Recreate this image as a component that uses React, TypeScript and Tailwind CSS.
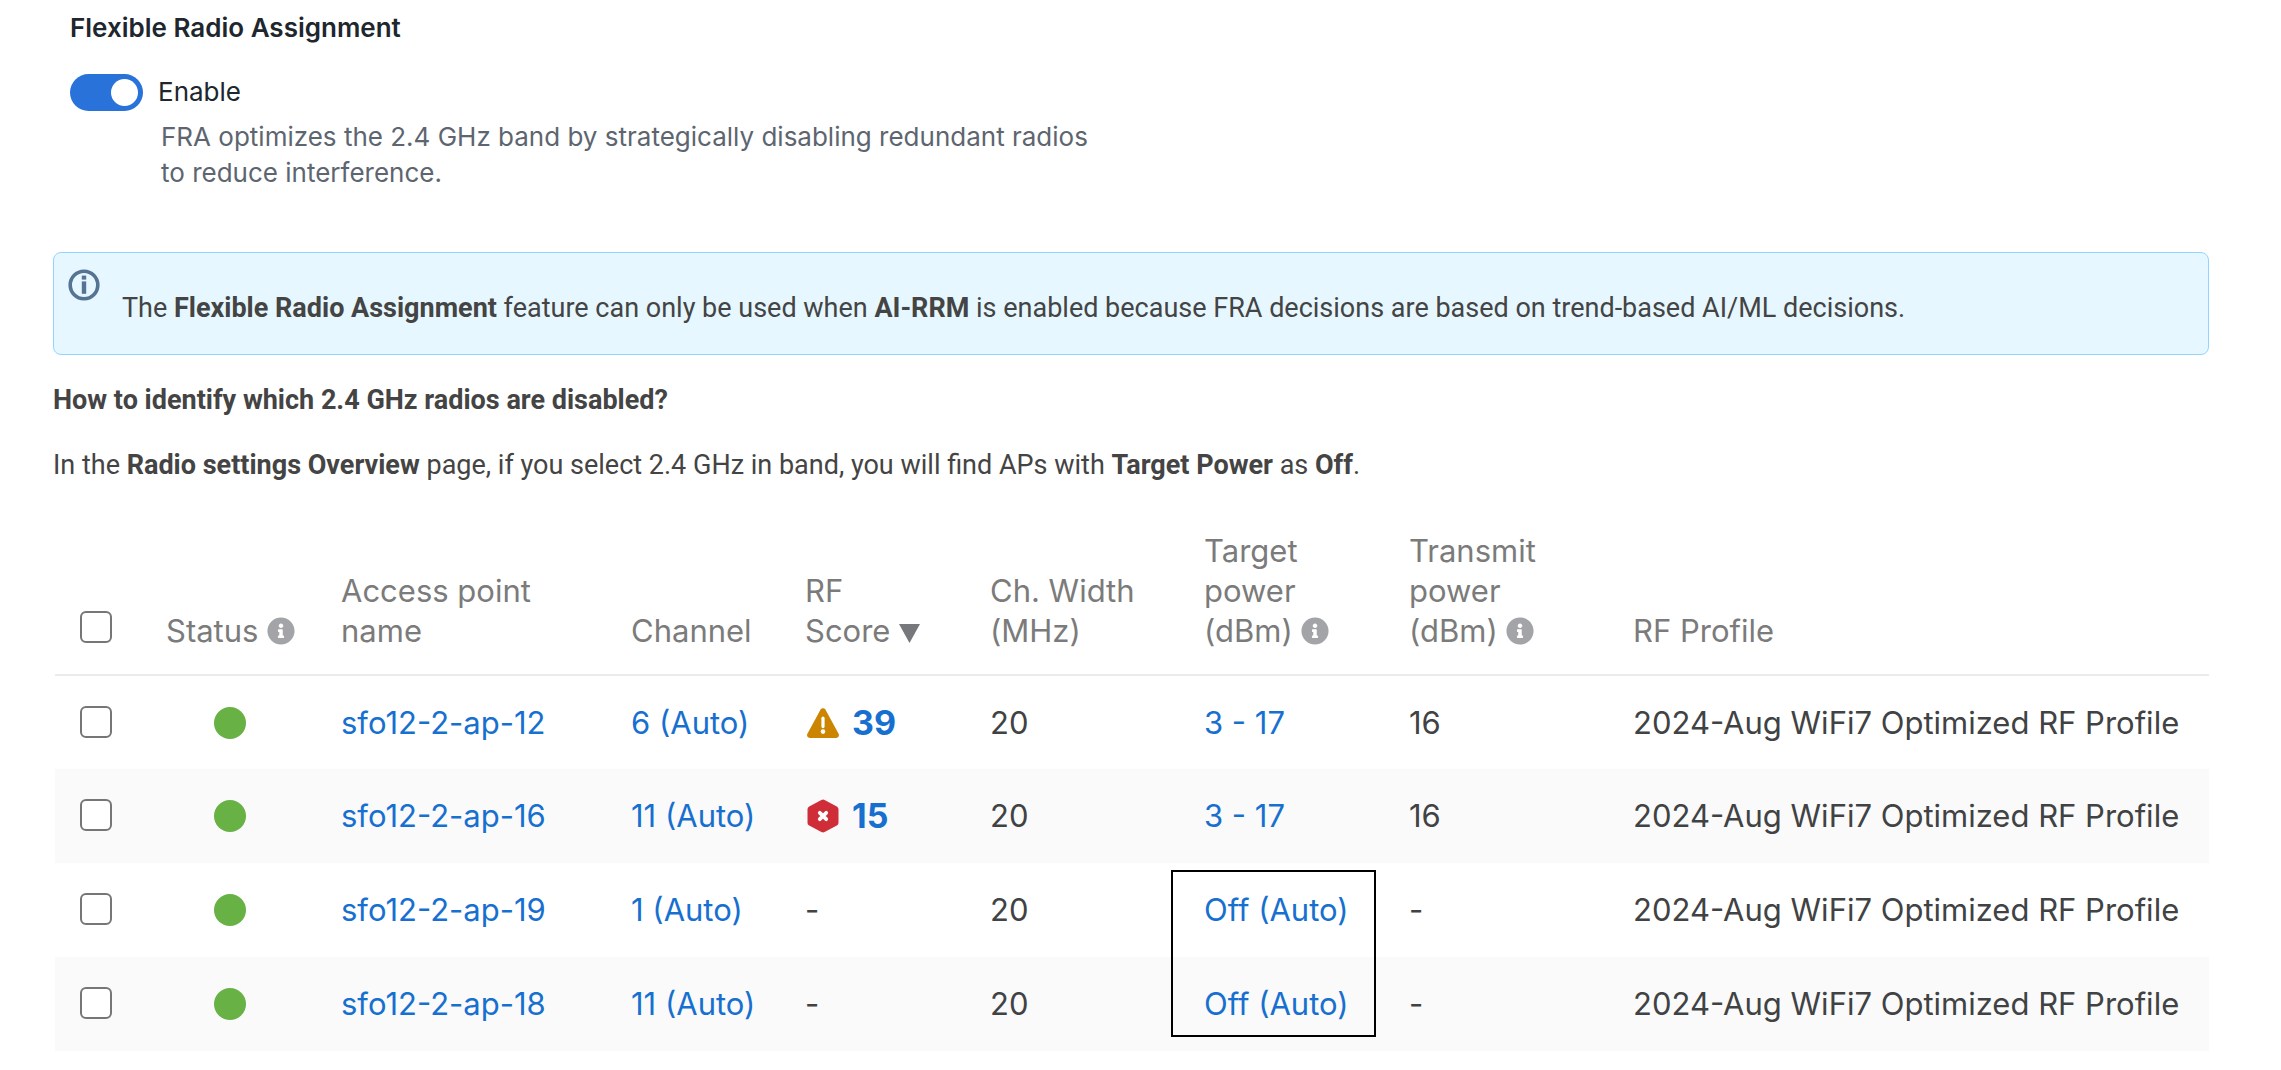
import React, { useState } from 'react';
import { FaInfoCircle } from 'react-icons/fa';

type Alarm = 'warning' | 'critical';

interface AccessPoint {
  name: string;
  channel: string;
  score?: number;
  alarm?: Alarm;
  width: string;
  target: string;
  transmit: string;
  profile: string;
}

const accessPoints: AccessPoint[] = [
  { name: 'sfo12-2-ap-12', channel: '6 (Auto)', score: 39, alarm: 'warning', width: '20', target: '3 - 17', transmit: '16', profile: '2024-Aug WiFi7 Optimized RF Profile' },
  { name: 'sfo12-2-ap-16', channel: '11 (Auto)', score: 15, alarm: 'critical', width: '20', target: '3 - 17', transmit: '16', profile: '2024-Aug WiFi7 Optimized RF Profile' },
  { name: 'sfo12-2-ap-19', channel: '1 (Auto)', width: '20', target: 'Off (Auto)', transmit: '-', profile: '2024-Aug WiFi7 Optimized RF Profile' },
  { name: 'sfo12-2-ap-18', channel: '11 (Auto)', width: '20', target: 'Off (Auto)', transmit: '-', profile: '2024-Aug WiFi7 Optimized RF Profile' },
];

const WarningIcon = () => (
  <svg viewBox="0 0 34 32" className="w-[34px] h-8 shrink-0" aria-hidden="true">
    <path d="M14.6 2.6a2.8 2.8 0 0 1 4.8 0l13.2 24.2a2.8 2.8 0 0 1-2.4 4.1H3.8a2.8 2.8 0 0 1-2.4-4.1z" fill="#cb8500" />
    <path d="M17 11.2v8.4" stroke="#fff" strokeWidth="3.2" strokeLinecap="round" />
    <circle cx="17" cy="24.6" r="2.3" fill="#fff" />
  </svg>
);

const CriticalIcon = () => (
  <svg viewBox="0 0 34 34" className="size-[34px] shrink-0" aria-hidden="true">
    <path d="M15.4.9a3.2 3.2 0 0 1 3.2 0l12.2 6.6a3.2 3.2 0 0 1 1.7 2.8v13.4a3.2 3.2 0 0 1-1.7 2.8l-12.2 6.6a3.2 3.2 0 0 1-3.2 0L3.2 26.5a3.2 3.2 0 0 1-1.7-2.8V10.3a3.2 3.2 0 0 1 1.7-2.8z" fill="#cf2e39" />
    <path d="M13.8 13.8l6.4 6.4M20.2 13.8l-6.4 6.4" stroke="#fff" strokeWidth="3.8" strokeLinecap="round" />
  </svg>
);

const NoteIcon = () => (
  <svg viewBox="0 0 32 32" className="size-8 shrink-0" aria-hidden="true">
    <circle cx="16" cy="16" r="13.8" fill="none" stroke="#557393" strokeWidth="3.6" />
    <rect x="13.8" y="6.6" width="4.4" height="4" fill="#557393" />
    <rect x="13.8" y="12.4" width="4.4" height="12.4" fill="#557393" />
  </svg>
);

const Info = () => <FaInfoCircle className="inline-block size-7 align-[-3px] text-[#a3a4a8]" aria-hidden="true" />;

const Tick: React.FC<{ label: string }> = ({ label }) => (
  <input
    type="checkbox"
    aria-label={label}
    className="block size-8 appearance-none rounded-md border-2 border-[#767676] bg-white checked:bg-[#1770cf]"
  />
);

const Link: React.FC<{ children: React.ReactNode }> = ({ children }) => (
  <a href="#" className="text-[#1770cf] hover:underline">{children}</a>
);

const App: React.FC = () => {
  const [enabled, setEnabled] = useState(true);

  return (
    <main className="min-h-screen bg-white pl-[53px] pr-[72px] font-['Inter',sans-serif]">
      {/* FRA setting */}
      <section className="pl-[17px] pt-2 text-[26px]">
        <h2 className="leading-10 font-semibold text-[#20262d]">Flexible Radio Assignment</h2>
        <label className="mt-6 flex w-fit items-center gap-[15px] leading-10 text-[#20262d]">
          <input
            type="checkbox"
            role="switch"
            checked={enabled}
            onChange={(e) => setEnabled(e.target.checked)}
            className="flex h-[37px] w-[73px] appearance-none items-center rounded-full bg-gray-400 px-[5px] before:size-[27px] before:rounded-full before:bg-white checked:justify-end checked:bg-[#2972d9]"
          />
          Enable
        </label>
        <p className="mt-[7px] max-w-[1035px] pl-[91px] leading-9 text-[#5d6570]">
          FRA optimizes the 2.4 GHz band by strategically disabling redundant radios to reduce interference.
        </p>
      </section>

      <div className="font-['Roboto',sans-serif] text-[27px] leading-10 text-[#444]">
        <aside className="mt-[61px] flex gap-[22px] rounded-lg border border-[#91d5ff] bg-[#e6f7ff] px-[14px] pt-4 pb-[26px]">
          <NoteIcon />
          <p className="mt-[19px]">
            The <strong>Flexible Radio Assignment</strong> feature can only be used when <strong>AI-RRM</strong> is enabled because FRA decisions are based on trend-based AI/ML decisions.
          </p>
        </aside>
        <h3 className="mt-[25px] font-bold">How to identify which 2.4 GHz radios are disabled?</h3>
        <p className="mt-[25px]">
          In the <strong>Radio settings Overview</strong> page, if you select 2.4 GHz in band, you will find APs with <strong>Target Power</strong> as <strong>Off</strong>.
        </p>
      </div>

      {/* Radio overview */}
      <table className="mt-[46px] ml-0.5 w-[calc(100%-2px)] table-fixed border-collapse text-left text-[31px] leading-10 text-[#404244]">
        <colgroup>
          <col className="w-[111px]" />
          <col className="w-[175px]" />
          <col className="w-[290px]" />
          <col className="w-[174px]" />
          <col className="w-[185px]" />
          <col className="w-[214px]" />
          <col className="w-[205px]" />
          <col className="w-[224px]" />
          <col className="w-[576px]" />
        </colgroup>
        <thead>
          <tr className="border-b-2 border-[#ebebeb] align-bottom whitespace-nowrap text-[#7b7b7b] *:pb-[23px] *:font-normal">
            <th className="pl-[25px]"><div className="pb-2"><Tick label="Select all" /></div></th>
            <th>Status <Info /></th>
            <th>Access point<br />name</th>
            <th>Channel</th>
            <th>
              RF<br />Score{' '}
              <svg viewBox="0 0 21 19" className="inline-block h-[19px] w-[21px]" aria-hidden="true">
                <path d="M0 0h21L10.5 19z" fill="#77787b" />
              </svg>
            </th>
            <th>Ch. Width<br />(MHz)</th>
            <th>Target<br />power<br />(dBm) <Info /></th>
            <th>Transmit<br />power<br />(dBm) <Info /></th>
            <th>RF Profile</th>
          </tr>
        </thead>
        <tbody>
          {accessPoints.map((ap, i) => (
            <tr key={ap.name} className="h-[94px] whitespace-nowrap even:bg-[#fafafa]">
              <td className="pb-0.5 pl-[25px]"><Tick label={`Select ${ap.name}`} /></td>
              <td className="pl-12"><span className="block size-8 rounded-full bg-[#68b145]" /></td>
              <td><Link>{ap.name}</Link></td>
              <td><Link>{ap.channel}</Link></td>
              <td>
                {ap.score === undefined ? '-' : (
                  <span className="flex items-center gap-3 pl-px text-[34px] font-bold">
                    {ap.alarm === 'warning' ? <WarningIcon /> : <CriticalIcon />}
                    <Link>{ap.score}</Link>
                  </span>
                )}
              </td>
              <td>{ap.width}</td>
              <td className="relative">
                <Link>{ap.target}</Link>
                {/* callout around the radios that FRA turned off */}
                {i === 2 && <span className="pointer-events-none absolute top-[7px] -left-[33px] h-[167px] w-[205px] border-2 border-black" />}
              </td>
              <td>{ap.transmit}</td>
              <td>{ap.profile}</td>
            </tr>
          ))}
        </tbody>
      </table>
    </main>
  );
};

export default App;
